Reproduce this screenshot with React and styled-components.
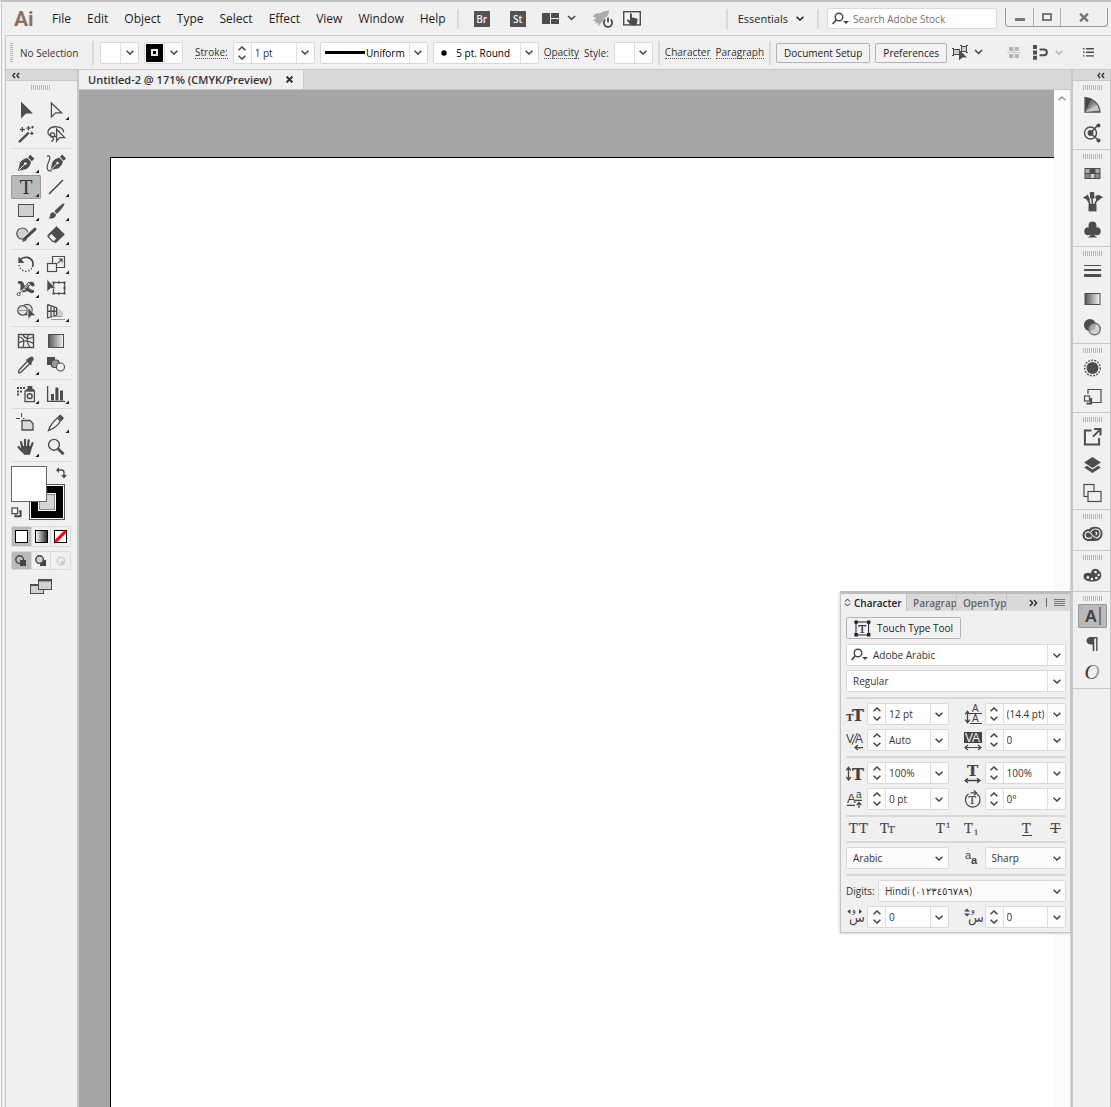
import React, { useState } from 'react';
import styled, { createGlobalStyle } from 'styled-components';

const GlobalStyle = createGlobalStyle`
  * {
    box-sizing: border-box;
  }
  body {
    margin: 0;
    background: #f0f0f0;
    color: #333;
    font-family: 'Open Sans', 'Noto Sans', 'DejaVu Sans', sans-serif;
    font-size: 10px;
    overflow: hidden;
  }
  button, input, select {
    margin: 0;
    padding: 0;
    border: 0;
    background: none;
    color: inherit;
    font: inherit;
  }
  svg {
    display: block;
    flex: none;
  }
`;

/* ---------- layout ---------- */

const Window = styled.div`
  min-height: 100vh;
  display: flex;
  flex-direction: column;
  border-top: 2px solid #c3c3c3;
  border-left: 1px solid #f8f8f8;
`;

const Frame = styled.div`
  flex: 1;
  display: flex;
  flex-direction: column;
  padding-left: 3px;
  border-left: 1px solid #c6c6c6;
`;

const MenuBar = styled.header`
  display: flex;
  align-items: center;
  height: 33px;
  padding: 0 3px 0 9px;
`;

const Logo = styled.span`
  width: 30px;
  color: #8b7062;
  font-family: Roboto, sans-serif;
  font-size: 21px;
  line-height: 30px;
  font-weight: 700;
`;

const Menus = styled.nav`
  display: flex;
  gap: 16px;
  padding-left: 8px;
`;

const MenuItem = styled.button`
  color: #1e1e1e;
  font-size: 12px;
  line-height: 18px;
`;

const Divider = styled.span`
  width: 2px;
  height: ${props => props.$height || 20}px;
  margin: 0 ${props => props.$after || 0}px 0 ${props => props.$before || 0}px;
  background: #dadada;
`;

const Spacer = styled.span`
  flex: none;
  width: ${props => props.$width}px;
`;

const AppBar = styled.div`
  display: flex;
  align-items: center;
  padding-left: 15px;
`;

const AppBadge = styled.button`
  width: 16px;
  height: 16px;
  margin-right: 16px;
  background: #535353;
  color: #eee;
  font-size: 10px;
  line-height: 16px;
  font-weight: 600;
  & + & {
    margin-left: 4px;
  }
`;

const IconButton = styled.button`
  display: flex;
  flex: none;
  align-items: center;
  justify-content: center;
  width: ${props => props.$width || 20}px;
  height: 20px;
  color: #4d4d4d;
  opacity: ${props => (props.disabled ? 0.35 : 1)};
`;

const Right = styled.div`
  display: flex;
  align-items: center;
  margin-left: auto;
`;

const Workspace = styled.button`
  display: flex;
  align-items: center;
  gap: 8px;
  color: #1e1e1e;
  font-size: 11px;
`;

const Search = styled.label`
  display: flex;
  align-items: center;
  gap: 4px;
  width: 170px;
  height: 21px;
  padding: 0 4px;
  background: #fff;
  border: 1px solid #d9d9d9;
  border-radius: 3px;
  input {
    flex: 1;
    min-width: 0;
    font-size: 10px;
    outline: none;
  }
  input::placeholder {
    color: #707070;
    opacity: 1;
  }
`;

const WindowControls = styled.div`
  display: flex;
  align-self: flex-start;
  height: 19px;
  margin-left: 8px;
  border: 1px solid #999;
  border-top: 0;
  border-radius: 0 0 4px 4px;
  button {
    display: flex;
    align-items: center;
    justify-content: center;
    width: 27px;
    color: #777;
  }
  button + button {
    border-left: 1px solid #b0b0b0;
  }
  button:last-child {
    width: 47px;
  }
`;

const ControlBar = styled.div`
  display: flex;
  align-items: center;
  height: 35px;
  padding: 0 17px 0 4px;
  border: 1px solid #c8c8c8;
  border-right: 0;
`;

const Grip = styled.span`
  flex: none;
  width: ${props => (props.$vertical ? 3 : 19)}px;
  height: ${props => (props.$vertical ? 19 : 5)}px;
  background: repeating-linear-gradient(
    ${props => (props.$vertical ? '180deg' : '90deg')},
    #b8b8b8 0 1px,
    transparent 1px 2px
  );
`;

const Selection = styled.span`
  width: 72px;
  padding-left: 7px;
  white-space: nowrap;
`;

const Controls = styled.div`
  display: flex;
  align-items: center;
  gap: 5px;
  white-space: nowrap;
`;

const TextLink = styled.a`
  color: #333;
  line-height: 12px;
  text-decoration: none;
  border-bottom: 1px dotted #555;
`;

const PushButton = styled.button`
  display: flex;
  align-items: center;
  gap: 6px;
  height: ${props => props.$height || 20}px;
  padding: 0 7px;
  border: 1px solid #b4b4b4;
  border-radius: 2px;
  background: #f2f2f2;
  color: #222;
  white-space: nowrap;
`;

const Box = styled.div`
  display: flex;
  width: ${props => (props.$width ? `${props.$width}px` : 'auto')};
  flex: ${props => (props.$width ? 'none' : '1')};
  min-width: 0;
  height: 22px;
  border: 1px solid #d9d9d9;
  border-radius: 2px;
  background: #fff;
  overflow: hidden;
  input {
    flex: 1;
    width: 0;
    min-width: 0;
    padding-left: ${props => (props.$tight ? 0 : 3)}px;
    outline: none;
  }
`;

const BoxButton = styled.button`
  display: flex;
  flex: none;
  align-items: center;
  justify-content: center;
  width: 18px;
  border-left: 1px solid #dedede;
  background: #fcfcfc;
  color: #444;
`;

const Spinner = styled.div`
  display: flex;
  flex: none;
  flex-direction: column;
  width: 18px;
  padding: 1px 0;
  border-right: 1px solid #dedede;
  background: #fcfcfc;
  button {
    display: flex;
    flex: 1;
    align-items: center;
    justify-content: center;
    color: #444;
  }
`;

const BoxValue = styled.span`
  display: flex;
  flex: 1;
  align-items: center;
  justify-content: space-between;
  padding: 0 4px;
  color: #000;
  font-weight: 500;
`;

const StrokeSwatch = styled.span`
  flex: 1;
  display: grid;
  place-items: center;
  margin: 1px;
  background: #000;
  &::after {
    content: '';
    width: 3px;
    height: 3px;
    border: 2px solid #e4e4e4;
  }
`;

const Body = styled.div`
  flex: 1;
  display: flex;
`;

/* ---------- toolbox ---------- */

const CollapseBar = styled.button`
  display: block;
  width: 100%;
  height: 11px;
  padding: 0 5px;
  background: #d9d9d9;
  border-bottom: 1px solid #c8c8c8;
  color: #333;
  svg {
    margin-left: ${props => (props.$right ? 'auto' : 0)};
  }
`;

const Toolbox = styled.aside`
  display: flex;
  flex: none;
  flex-direction: column;
  width: 74px;
  border-left: 1px solid #c8c8c8;
  border-right: 2px solid #c8c8c8;
  > ${Grip} {
    margin: 4px 0 0 25px;
  }
`;

const ToolList = styled.div`
  width: 60px;
  margin: 8px 0 0 5px;
`;

const ToolGroup = styled.div`
  display: grid;
  grid-template-columns: 1fr 1fr;
  padding-bottom: 2px;
  margin-bottom: 2px;
  border-bottom: 1px solid #d9d9d9;
`;

const ToolButton = styled.button`
  height: 24px;
  color: #4d4d4d;
  border-radius: 2px;
  background: ${props => (props.$active ? '#bababa' : 'none')};
  box-shadow: ${props => (props.$active ? 'inset 0 0 0 1px #999' : 'none')};
`;

const Paint = styled.div`
  position: relative;
  width: 60px;
  height: 56px;
  margin-top: 4px;
`;

const FillSwatch = styled.button`
  position: absolute;
  top: 0;
  left: 0;
  width: 36px;
  height: 36px;
  background: #fff;
  border: 1px solid #666;
`;

const StrokeRing = styled.button`
  position: absolute;
  top: 18px;
  left: 18px;
  width: 36px;
  height: 36px;
  border: 1px solid #555;
  background: #d4d4d4;
  box-shadow: inset 0 0 0 1px #fff, inset 0 0 0 8px #000, inset 0 0 0 9px #fff,
    inset 0 0 0 10px #888;
`;

const SwapButton = styled.button`
  position: absolute;
  top: 0;
  right: 4px;
  color: #4d4d4d;
`;

const DefaultsButton = styled.button`
  position: absolute;
  bottom: 4px;
  left: 0;
  color: #4d4d4d;
`;

const Modes = styled.div`
  display: flex;
  height: ${props => props.$height}px;
  margin-top: 4px;
  border: 1px solid #dadada;
  border-radius: 2px;
  button {
    flex: 1;
    display: grid;
    place-items: center;
  }
  button:first-child {
    background: #bababa;
  }
  button + button {
    border-left: 1px solid #dadada;
  }
`;

const ScreenMode = styled.button`
  display: block;
  margin: 9px auto 0;
  color: #4d4d4d;
`;

/* ---------- document ---------- */

const Document = styled.main`
  position: relative;
  flex: 1;
  display: flex;
  flex-direction: column;
  min-width: 0;
`;

const DocTabs = styled.div`
  display: flex;
  height: 20px;
  background: #d9d9d9;
  border-bottom: 1px solid #c4c4c4;
`;

const DocTab = styled.div`
  display: flex;
  align-items: center;
  gap: 14px;
  padding: 0 10px 0 9px;
  background: #f0f0f0;
  border-right: 1px solid #c8c8c8;
  font-size: 11px;
  font-weight: 600;
  white-space: nowrap;
`;

const CanvasArea = styled.div`
  flex: 1;
  display: flex;
`;

const Canvas = styled.div`
  flex: 1;
  display: flex;
  padding: 67px 0 0 31px;
  background: #a5a5a5;
`;

const Artboard = styled.div`
  flex: 1;
  background: #fff;
  border-top: 1px solid #000;
  border-left: 1px solid #000;
`;

const ScrollTrack = styled.div`
  width: 17px;
  padding: 6px 4px;
  background: #fbfbfb;
  border-right: 1px solid #d4d4d4;
  color: #999;
`;

/* ---------- dock ---------- */

const Dock = styled.aside`
  flex: none;
  width: 40px;
  border-left: 2px solid #c8c8c8;
  border-right: 1px solid #c8c8c8;
`;

const DockGroup = styled.div`
  display: flex;
  flex-direction: column;
  align-items: center;
  padding: 4px 0 1px 2px;
  border-bottom: 1px solid #c8c8c8;
`;

const DockList = styled.div`
  display: flex;
  flex-direction: column;
  gap: 4px;
  padding: 3px 0;
`;

const DockButton = styled.button`
  display: grid;
  place-items: center;
  width: 29px;
  height: 24px;
  border-radius: 2px;
  color: #4d4d4d;
  background: ${props => (props.$active ? '#bababa' : 'none')};
  box-shadow: ${props => (props.$active ? 'inset 0 0 0 1px #999' : 'none')};
`;

/* ---------- character panel ---------- */

const Panel = styled.section`
  position: absolute;
  top: 521px;
  right: 0;
  width: 231px;
  background: #f0f0f0;
  border: 1px solid #c4c4c4;
  border-top: 3px solid #bcbcbc;
  box-shadow: -1px 1px 2px rgba(0, 0, 0, 0.15);
`;

const PanelTabs = styled.div`
  display: flex;
  height: 17px;
  background: #d9d9d9;
`;

const PanelTab = styled.button`
  display: flex;
  align-items: center;
  gap: 3px;
  width: ${props => props.$width}px;
  padding-left: ${props => (props.$active ? 3 : 6)}px;
  overflow: hidden;
  white-space: nowrap;
  font-weight: 600;
  color: ${props => (props.$active ? '#222' : '#666')};
  background: ${props => (props.$active ? '#f0f0f0' : '#d9d9d9')};
  border-right: 1px solid #c4c4c4;
`;

const PanelMenu = styled.div`
  display: flex;
  align-items: center;
  gap: 8px;
  margin-left: auto;
  padding-right: 5px;
  color: #333;
  button + button {
    padding-left: 7px;
    border-left: 1px solid #666;
  }
`;

const PanelBody = styled.div`
  display: flex;
  flex-direction: column;
  gap: 4px;
  padding: 6px 4px 4px 5px;
`;

const TouchRow = styled.div`
  display: flex;
  padding-bottom: 1px;
`;

const Rule = styled.hr`
  width: 100%;
  height: 2px;
  margin: 1px 0 0;
  border: 0;
  background: #d9d9d9;
`;

const FieldPair = styled.div`
  display: grid;
  grid-template-columns: 1fr 1fr;
  gap: 15px;
`;

const FieldRow = styled.div`
  display: flex;
  align-items: center;
  min-width: 0;
`;

const FieldIcon = styled.label`
  flex: none;
  width: 21px;
  color: #444;
`;

const FontSearch = styled.label`
  display: flex;
  align-items: center;
  width: 26px;
  padding-left: 4px;
`;

const DigitsLabel = styled.label`
  flex: none;
  width: 32px;
`;

const TypeStyles = styled.div`
  display: flex;
  justify-content: space-between;
  height: 15px;
  padding: 0 4px 0 2px;
  div {
    display: flex;
    gap: 9px;
  }
  button {
    color: #444;
  }
`;

const SelectBox = styled.div`
  position: relative;
  flex: 1;
  min-width: 0;
  height: 22px;
  border: 1px solid #d9d9d9;
  border-radius: 2px;
  background: ${props => (props.$split ? '#fff' : '#fbfbfb')};
  select {
    width: 100%;
    height: 20px;
    padding-left: 6px;
    appearance: none;
    outline: none;
  }
`;

const SelectArrow = styled.span`
  position: absolute;
  top: 0;
  right: 0;
  display: grid;
  place-items: center;
  width: 18px;
  height: 20px;
  border-left: 1px solid ${props => (props.$split ? '#dedede' : 'transparent')};
  background: #fcfcfc;
  color: #444;
  pointer-events: none;
`;

/* ---------- icons ---------- */

const Chevron = ({ up }) => (
  <svg width='8' height='5' viewBox='0 0 8 5' fill='none' stroke='currentColor' strokeWidth='1.5'>
    <path d={up ? 'M.6 4.3L4 1l3.4 3.3' : 'M.6.7L4 4 7.4.7'} />
  </svg>
);

const DoubleArrow = ({ right }) => (
  <svg width='9' height='10' viewBox='0 0 9 10' fill='none' stroke='currentColor' strokeWidth='1.5'>
    {right ? (
      <path d='M1 2l2.6 3L1 8M5 2l2.6 3L5 8' />
    ) : (
      <path d='M4 3L2 5.5 4 8M8 3L6 5.5 8 8' />
    )}
  </svg>
);

const Lens = () => (
  <svg width='17' height='14' viewBox='0 0 17 14' fill='none' stroke='#444' strokeWidth='1.4'>
    <circle cx='7' cy='5' r='3.8' />
    <path d='M4.3 7.8L.6 12' strokeWidth='1.7' />
    <path d='M11 9h6l-3 3z' fill='#444' stroke='none' />
  </svg>
);

const Nib = () => (
  <g>
    <path d='M2 18L4 9.5Q7 5.5 11.2 5L15 8.8Q14.5 13 10.5 16z' fill='currentColor' />
    <path d='M12 4.2L14.3 1.7 18.4 5.8 15.8 8.2z' fill='currentColor' />
    <path d='M2.6 17.4L9 11' stroke='#f0f0f0' strokeWidth='1' />
    <circle cx='9.4' cy='10.6' r='1.3' fill='#f0f0f0' />
  </g>
);

const toolIcons = {
  selection: <path d='M5 1.6V18.4L10 13.6H17z' fill='currentColor' />,
  direct: (
    <path d='M5.4 3V17L9.6 12.9H15.6z' fill='none' stroke='currentColor' strokeWidth='1.3' />
  ),
  wand: (
    <g>
      <path d='M3 18.2L12.8 8.6' stroke='currentColor' strokeWidth='2.4' />
      <path
        d='M6.3 3v5M3.8 5.5h5M12.5 2v4.4M10.3 4.2h4.4M15.8 7.5v3.6M14 9.3h3.6M16.5 2v2.4M15.3 3.2h2.4'
        stroke='currentColor'
        strokeWidth='1.3'
      />
    </g>
  ),
  lasso: (
    <g fill='none' stroke='currentColor' strokeWidth='1.3'>
      <path d='M10 12.5C4 13.5 1.5 10.5 2 7.5 3 4 7 2.6 11 2.8c4 .2 7 2.4 6.6 5.6' />
      <path d='M5 12.5C3 11 4.5 8.4 7 9s2.4 4-.4 4.3c-2 0-2.4-1.8-1-2.4M6.4 13.4c2 .6 1 3.6-1.4 4' />
      <path d='M10.6 5.2V17l3-3.4H18.6z' fill='#f0f0f0' />
    </g>
  ),
  pen: <Nib />,
  curvature: (
    <g>
      <g transform='translate(2.6 0) scale(.95)'>
        <Nib />
      </g>
      <path
        d='M1 3.4C4.2 1.6 4.4 5 3 8s-3.2 7-.8 9.2c1.4 1 2.6.8 3.4.2'
        fill='none'
        stroke='currentColor'
        strokeWidth='1.2'
      />
    </g>
  ),
  type: (
    <text x='10' y='17' textAnchor='middle' fontFamily='DejaVu Serif, serif' fontSize='19' fill='#333'>
      T
    </text>
  ),
  line: <path d='M3 17L17 3' stroke='currentColor' strokeWidth='1.6' />,
  rect: <rect x='2.5' y='3.5' width='15' height='12' fill='#d0d0d0' stroke='currentColor' />,
  brush: (
    <g fill='currentColor'>
      <path d='M18.4 2.2c-1.4-.6-8.2 6-10 8.2l2.4 2.4c2.2-1.6 8.6-9.2 7.6-10.6z' />
      <path d='M7.6 11.2c-3 .2-3.4 1.8-3.4 3.2 0 1.4-1 2.4-2 2.6 2.6 1.2 7.6.8 7.8-3.4z' />
    </g>
  ),
  shaper: (
    <g>
      <circle cx='6.4' cy='8.6' r='5.6' fill='#d0d0d0' stroke='currentColor' strokeWidth='1.2' />
      <path d='M18.6 4.4l-9.6 9' stroke='#f0f0f0' strokeWidth='5' />
      <path d='M19 4.2L9.4 13.2' stroke='currentColor' strokeWidth='3' strokeLinecap='round' />
      <path d='M8 12l3 3-5 2.2z' fill='currentColor' />
    </g>
  ),
  eraser: (
    <g stroke='currentColor' strokeWidth='1.2'>
      <path d='M10.4 2L18 9.4 9.6 17.4 2 10.4z' fill='currentColor' />
      <path d='M5.4 8L11 13.6 8 16.6H7L2.4 12V11z' fill='#f0f0f0' />
    </g>
  ),
  rotate: (
    <g fill='none' stroke='currentColor' strokeWidth='1.7'>
      <path d='M4 5.6C8 1.8 14.6 3 16.6 7.4c.8 2 .7 3.6 0 5.6' />
      <path d='M15.8 14.2C12.6 19 5 18.8 2.8 11' strokeDasharray='1.4 1.8' strokeWidth='1.4' />
      <path d='M2.4 2.6V9H8.6z' fill='currentColor' stroke='none' />
    </g>
  ),
  scale: (
    <g fill='none' stroke='currentColor' strokeWidth='1.2'>
      <path d='M6.5 9V2.5h12v11H11' />
      <rect x='1.5' y='9.5' width='9' height='8' />
      <path d='M11.6 9.4l4-4M12.6 5h3.4v3.4' />
    </g>
  ),
  width: (
    <g>
      <path
        d='M2 3.4c3-1.2 6 0 6 3 0 1.4 1 1.6 2.2.4C12 4.6 15 3 17.4 4.4c1.8 1.2 1.4 3.6-.4 4-1.6.2-2-.8-2-1.6-1.8 0-2.6 1.6-2 3 .8 1.6 3 2 5.4 2.6 0 3-3.2 3.6-5.4 1.6-1.6-1.4-2.6-.8-4 0-2 1-4 .4-4.6-1.4-.4-1.6.4-3.6.2-5C4.4 5.8 3.2 5 1.6 5.6z'
        fill='currentColor'
      />
      <path d='M2.6 16.4C5 13 8 11 12.4 6.6' fill='none' stroke='#f0f0f0' strokeWidth='2' />
      <path d='M2.6 16.4C5 13 8 11 12.4 6.6' fill='none' stroke='currentColor' />
      <g fill='#f0f0f0' stroke='currentColor'>
        <circle cx='2.6' cy='16.2' r='1.5' />
        <circle cx='12.8' cy='6.2' r='1.5' />
        <circle cx='8' cy='11.4' r='1.5' />
      </g>
    </g>
  ),
  transform: (
    <g>
      <rect x='7.5' y='4.5' width='11' height='11' fill='none' stroke='currentColor' strokeWidth='1.2' />
      <path
        d='M6.5 3.5h2v2h-2zM12 3.5h2v2h-2zM17.5 3.5h2v2h-2zM17.5 9h2v2h-2zM6.5 14.5h2v2h-2zM12 14.5h2v2h-2zM17.5 14.5h2v2h-2z'
        fill='currentColor'
      />
      <path d='M1 1.4V14L4.4 10.4H10z' fill='currentColor' stroke='#f0f0f0' strokeWidth='.6' />
    </g>
  ),
  builder: (
    <g fill='none' stroke='currentColor' strokeWidth='1.2'>
      <circle cx='11' cy='7.6' r='5.2' fill='#e4e4e4' />
      <circle cx='6.6' cy='8.4' r='4.8' fill='#e4e4e4' />
      <path d='M3.6 8.5h11' strokeDasharray='1 1' />
      <path d='M12 5.6V17.4l3.4-3.6H20z' fill='currentColor' stroke='#f0f0f0' strokeWidth='.7' />
    </g>
  ),
  perspective: (
    <g fill='none' stroke='currentColor'>
      <path d='M11 5.5l6 5v4h-6z' fill='#ccc' stroke='none' />
      <path d='M1.6 2.4V16.4M5 3.6V14.8M8 4.8V14M10.6 5.6V13M1.6 2.6L11 5.8M1.6 9L11 9.4M1.6 16L11 13' strokeWidth='1.3' />
      <path d='M6 14.5h10M5 17.5h14' stroke='#999' />
    </g>
  ),
  mesh: (
    <g fill='none' stroke='currentColor'>
      <rect x='2.5' y='3.5' width='15' height='13' strokeWidth='1.4' />
      <path
        d='M2.5 6C7 6 9 9 7 16.5M7 3.5C8 8 13 8 17.5 6M12.6 3.5C10 8 11 12 14 16.5M2.5 12c5-3 10-3 15 .6'
        strokeWidth='1.2'
      />
    </g>
  ),
  gradient: (
    <rect x='2.5' y='3.5' width='15' height='13' fill='url(#fadeRight)' stroke='currentColor' />
  ),
  dropper: (
    <g>
      <path
        d='M11 6.8L3.6 14.4c-1 1.2-1.4 2.4-1 3 .6.6 2 .2 3-.8L13.2 9.2'
        fill='none'
        stroke='currentColor'
        strokeWidth='1.4'
      />
      <path
        d='M9.6 4.8l1.6-.6c.4-.4 2.4-2.8 4.4-2.8 2.2.2 2.6 2.4 1.6 3.8-.6 1-1.4 1.6-1.4 1.6l-.4 2.8-1.2 1z'
        fill='currentColor'
      />
    </g>
  ),
  blend: (
    <g stroke='currentColor' strokeWidth='1.1'>
      <path d='M1 2h8v8H1z' fill='currentColor' stroke='none' />
      <rect x='5.5' y='5' width='7.5' height='7.5' rx='2.5' fill='#999' />
      <circle cx='14.5' cy='12' r='4' fill='#f0f0f0' />
    </g>
  ),
  sprayer: (
    <g>
      <path
        d='M1 3h2v2H1zM4 3h2v2H4zM7 3h2v2H7zM1 6.4h2v2H1zM4 6.4h2v2H4zM1 9.6h2v2H1z'
        fill='currentColor'
      />
      <path d='M11.6 2h4.8v3h1.8v2h-8V5h1.4z' fill='currentColor' />
      <rect x='9' y='7' width='9.4' height='10.6' fill='none' stroke='currentColor' strokeWidth='1.3' />
      <circle cx='13.7' cy='12.2' r='2.4' fill='none' stroke='currentColor' strokeWidth='1.5' />
    </g>
  ),
  graph: (
    <g>
      <path d='M1.6 2v15.4H19' fill='none' stroke='currentColor' strokeWidth='1.3' />
      <path d='M5 10h3v6.4H5zM9.4 3.6h3v12.8h-3zM14 6.6h3v9.8h-3z' fill='currentColor' />
    </g>
  ),
  artboard: (
    <g fill='none' stroke='currentColor'>
      <path d='M0 5.5h4M5.5 0v4M7 5.5h1.4' />
      <path d='M6 7.5h8l3 3v6.5H6z' fill='#d8d8d8' strokeWidth='1.3' />
    </g>
  ),
  slice: (
    <g>
      <path
        d='M2.4 17.6C4 13 7 8.6 11.4 5L14.4 8c-2 4-6.6 7.6-12 9.6z'
        fill='none'
        stroke='currentColor'
        strokeWidth='1.3'
      />
      <path d='M11.6 3.8L14.4 1.6 18 5 15.4 8.2z' fill='currentColor' />
    </g>
  ),
  hand: (
    <g fill='none' stroke='currentColor' strokeLinecap='round' strokeWidth='2.2'>
      <path d='M6.2 10L5 5M9 9V2.8M12 9.4l.6-6M14.8 10.6l1.8-4.4M5.6 13.6L2.6 10' />
      <path
        d='M5.4 9h9.8c1 0 .4 4-.6 6.6-.4 1.2-.6 1.8-.6 2.2H8c-.4-1.6-2.2-2.4-3.2-4.6z'
        fill='currentColor'
        stroke='none'
      />
    </g>
  ),
  zoom: (
    <g fill='none' stroke='currentColor'>
      <circle cx='8' cy='7.8' r='5.4' strokeWidth='1.4' />
      <path d='M12 11.8l5.6 5.4' strokeWidth='2.8' />
    </g>
  )
};

const ToolIcon = ({ name, more }) => (
  <svg width='30' height='24' viewBox='0 0 30 24'>
    <g transform='translate(5 2)'>{toolIcons[name]}</g>
    {more && <path d='M28 18.4V22H24.4z' fill='#222' />}
  </svg>
);

const dockIcons = {
  guide: (
    <g>
      <path d='M2.6 17V2.6C10 3 17 9 17.4 17z' fill='#999' stroke='currentColor' strokeWidth='1.4' />
      <path d='M2.6 17L3 2.8C5.6 3 7.6 3.6 9 4.6z' fill='#444' />
      <path d='M2.6 17L9 4.6 12 6.6z' fill='#777' />
      <path d='M2.6 17L14.6 9.6 17 15.6z' fill='#c8c8c8' />
    </g>
  ),
  share: (
    <g fill='none' stroke='currentColor' strokeWidth='1.4'>
      <circle cx='8' cy='10' r='6' />
      <circle cx='8' cy='10' r='2.2' fill='currentColor' />
      <path d='M8 10l7-7.4M8 10l7.6 7' />
      <circle cx='16' cy='2.6' r='2' fill='currentColor' stroke='none' />
      <circle cx='16' cy='17.4' r='2' fill='currentColor' stroke='none' />
    </g>
  ),
  swatches: (
    <g stroke='currentColor'>
      <rect x='2.5' y='4.5' width='15' height='10' fill='currentColor' />
      <path d='M3 5h4v4H3zM13 5h4v4h-4z' fill='#aaa' stroke='none' />
      <path d='M3 10h4v4H3zM13 10h4v4h-4z' fill='#888' stroke='none' />
      <path d='M8 10h4v4H8z' fill='#c8c8c8' stroke='none' />
    </g>
  ),
  brushes: (
    <g fill='none' stroke='currentColor' strokeWidth='1.6'>
      <path d='M6 12h8v7.4H6z' fill='currentColor' stroke='none' />
      <path d='M7.6 12L4.4 6.4M10 12L9.4 5M12.4 12l3-5.6' />
      <path
        d='M2 5.6l3-2 1.6 4zM8 1l2.8-.6.4 5.4H8.4zM13.6 4.6c2-1.4 4-.8 5.4.6-2 .4-2.6 3.4-4.6 2.8z'
        fill='currentColor'
      />
    </g>
  ),
  symbols: (
    <g fill='currentColor'>
      <circle cx='10' cy='5.4' r='4' />
      <circle cx='5.8' cy='11.2' r='4' />
      <circle cx='14.2' cy='11.2' r='4' />
      <path d='M9.2 9h1.6c0 4 .4 6.4 4 8.6H5.2c3.6-2.2 4-4.6 4-8.6z' />
    </g>
  ),
  stroke: (
    <path d='M1.6 4h17v1h-17zM1.6 8h17v2h-17zM1.6 13h17v3h-17z' fill='currentColor' />
  ),
  gradient: (
    <rect x='2.5' y='4.5' width='15' height='11' fill='url(#fadeRight)' stroke='currentColor' />
  ),
  transparency: (
    <g>
      <circle cx='7.4' cy='8' r='6' fill='#4d4d4d' />
      <circle cx='12' cy='12' r='5.8' fill='#c8c8c8' fillOpacity='.75' stroke='#666' strokeWidth='1.3' />
    </g>
  ),
  appearance: (
    <g>
      <circle cx='10' cy='10' r='6' fill='currentColor' />
      <circle cx='10' cy='10' r='7.8' fill='none' stroke='currentColor' strokeWidth='1.2' strokeDasharray='2 1.2' />
    </g>
  ),
  styles: (
    <g fill='none' stroke='currentColor' strokeWidth='1.2'>
      <path d='M5.5 8V3.5h13v13H9' />
      <rect x='2' y='10' width='5' height='5' />
      <path d='M8.6 12v5.4H4' strokeWidth='2' />
    </g>
  ),
  assets: (
    <g fill='none' stroke='currentColor' strokeWidth='2'>
      <path d='M9 3.4H2.4v14.2h14.2V11' />
      <path d='M10.4 9.6l6.4-6.2M11.6 2H18v6.4' />
    </g>
  ),
  layers: (
    <g fill='currentColor'>
      <path d='M10 2l8.4 5.6L10 13 1.6 7.6z' />
      <path d='M1.6 12.4L4.4 10.8 10 14.4l5.6-3.6 2.8 1.6L10 18z' />
    </g>
  ),
  boards: (
    <g fill='#f0f0f0' stroke='currentColor' strokeWidth='1.2'>
      <rect x='1.5' y='1.5' width='10' height='12' />
      <rect x='5.5' y='8.5' width='13' height='10' />
    </g>
  ),
  cloud: (
    <g fill='none'>
      <path
        d='M12.6 2.8c4.6 0 7.4 3 7.4 7s-3 7.2-7.4 7.2H6.4C2.6 17 0 14.6 0 11.2 0 7.8 2.8 5 6.6 5.2 8 3.6 10 2.8 12.6 2.8z'
        fill='currentColor'
      />
      <path
        d='M13 13.4c-3.6 0-3.8-5.6-7-5.6-4.6 0-4.4 6.6 0 6.6 1.4 0 2.4-.4 3.4-1.4M8.4 7.6c1.2-1.8 2.6-2.6 4.4-2.6 3 0 4.8 2 4.8 4.6s-1.8 4.4-4.6 4.4M13 10.6c1.8 0 1.6-2.4-.2-2.4'
        stroke='#f0f0f0'
        strokeWidth='1.2'
      />
    </g>
  ),
  palette: (
    <g>
      <path
        d='M1 11.4C1.2 8 4.4 7.6 7 8c2.6.2 1.4-2.4 3.2-3.6C14 2.4 19 6 18.8 10.4c-.2 4-4 6-8.8 6-5.4 0-9-1.6-9-5z'
        fill='currentColor'
      />
      <g fill='#f0f0f0'>
        <circle cx='13' cy='7' r='1.3' />
        <circle cx='16.2' cy='10' r='1.2' />
        <circle cx='13.8' cy='13' r='1.3' />
        <circle cx='9.4' cy='14' r='1.3' />
        <circle cx='5.4' cy='12.4' r='1.3' />
      </g>
    </g>
  ),
  character: (
    <g>
      <text
        x='8.5'
        y='16'
        textAnchor='middle'
        fontSize='17'
        fontWeight='700'
        fontFamily='Liberation Sans, sans-serif'
        fill='#444'
      >
        A
      </text>
      <path d='M17.5 1v18' stroke='#333' />
    </g>
  ),
  paragraph: (
    <path d='M15 3v14h-1.4V4.6H11.8V17h-1.6v-6.6C6.4 11 4 9.4 4 6.8 4 4.4 5.8 3 8.4 3z' fill='currentColor' />
  ),
  opentype: (
    <text
      x='9.5'
      y='17'
      textAnchor='middle'
      fontSize='21'
      fontStyle='italic'
      fontFamily='Liberation Serif, serif'
      fill='url(#fadeO)'
    >
      O
    </text>
  )
};

const DockIcon = ({ name }) => (
  <svg width='21' height='20' viewBox='0 0 20 20'>
    {dockIcons[name]}
  </svg>
);

const Serif = ({ x, y, size, children, bold }) => (
  <text
    x={x}
    y={y}
    fontSize={size}
    fontWeight={bold ? 700 : 400}
    fontFamily='DejaVu Serif, serif'
    fill='currentColor'
    stroke='currentColor'
    strokeWidth='.2'
  >
    {children}
  </text>
);

const Sans = ({ x, y, size, children, fill }) => (
  <text x={x} y={y} fontSize={size} fontFamily='Liberation Sans, sans-serif' fill={fill || 'currentColor'}>
    {children}
  </text>
);

const Arabic = ({ x, y, size, children }) => (
  <text x={x} y={y} fontSize={size} fontFamily='DejaVu Sans, sans-serif' fill='currentColor'>
    {children}
  </text>
);

const fieldIcons = {
  size: (
    <g>
      <Serif x='0' y='17' size='10' bold>T</Serif>
      <Serif x='6' y='17' size='16' bold>T</Serif>
    </g>
  ),
  leading: (
    <g>
      <Sans x='8' y='8' size='10'>A</Sans>
      <Sans x='8' y='18' size='10'>A</Sans>
      <path d='M6 9.5h12M6 19.5h12' stroke='currentColor' />
      <path d='M3.5 8v10M1.2 10.4l2.3-3 2.3 3M1.2 15.6l2.3 3 2.3-3' fill='none' stroke='currentColor' strokeWidth='1.3' />
    </g>
  ),
  kerning: (
    <g>
      <Sans x='0' y='13' size='12'>V</Sans>
      <Sans x='9' y='13' size='12'>A</Sans>
      <path d='M6 14.6L11.4 3' stroke='currentColor' />
      <path d='M9.6 17.6h7.4M12 15l-3 2.6L12 20' fill='none' stroke='currentColor' strokeWidth='1.2' />
    </g>
  ),
  tracking: (
    <g>
      <path d='M0 2h18v11H0z' fill='#444' />
      <Sans x='1' y='12' size='12' fill='#f0f0f0'>VA</Sans>
      <path d='M1 17.5h16M4 15l-3 2.5L4 20M14 15l3 2.5L14 20' fill='none' stroke='currentColor' strokeWidth='1.2' />
    </g>
  ),
  vscale: (
    <g>
      <Serif x='6' y='17' size='16' bold>T</Serif>
      <path d='M2.5 5v11M.2 7.4l2.3-3 2.3 3M.2 14l2.3 3 2.3-3' fill='none' stroke='currentColor' strokeWidth='1.3' />
    </g>
  ),
  hscale: (
    <g>
      <Serif x='3' y='13' size='15' bold>T</Serif>
      <path d='M1 17.5h15M4 15.2l-3 2.3 3 2.3M13 15.2l3 2.3-3 2.3' fill='none' stroke='currentColor' strokeWidth='1.3' />
    </g>
  ),
  baseline: (
    <g>
      <Sans x='1' y='14' size='13'>A</Sans>
      <Sans x='10' y='9' size='10'>a</Sans>
      <path d='M1 16.3h8M9 11.3h7M13 19v-5M10.8 16l2.2-2.6 2.2 2.6' fill='none' stroke='currentColor' strokeWidth='1.2' />
    </g>
  ),
  rotation: (
    <g fill='none' stroke='currentColor' strokeWidth='1.2'>
      <Serif x='4.4' y='15' size='11'>T</Serif>
      <path d='M13.2 5A7.3 7.3 0 1 1 4.6 4.8M6.4 3.8h6M9.8 1.4l3 2.6-3 2.4' />
    </g>
  ),
  aa: (
    <g>
      <Sans x='1' y='11' size='11'>a</Sans>
      <text x='7' y='16' fontSize='11' fontWeight='700' fontFamily='Liberation Sans, sans-serif' fill='currentColor'>
        a
      </text>
    </g>
  ),
  kashida: (
    <g>
      <Arabic x='3' y='15' size='13'>س</Arabic>
      <Arabic x='6' y='6' size='8'>و</Arabic>
      <path d='M4.4 2v5L1.4 4.5zM13 2v5l3-2.5z' fill='currentColor' />
    </g>
  ),
  diacritic: (
    <g>
      <Arabic x='4' y='15' size='13'>س</Arabic>
      <Arabic x='7' y='6' size='8'>و</Arabic>
      <path d='M0 4.4h6L3 1.4zM0 6.6h6l-3 3z' fill='currentColor' />
    </g>
  )
};

const menus = ['File', 'Edit', 'Object', 'Type', 'Select', 'Effect', 'View', 'Window', 'Help'];

// [icon, label, has hidden tools]
const toolGroups = [
  [
    ['selection', 'Selection', false],
    ['direct', 'Direct Selection', true],
    ['wand', 'Magic Wand', false],
    ['lasso', 'Lasso', false]
  ],
  [
    ['pen', 'Pen', true],
    ['curvature', 'Curvature', false],
    ['type', 'Type', true],
    ['line', 'Line Segment', true],
    ['rect', 'Rectangle', true],
    ['brush', 'Paintbrush', true],
    ['shaper', 'Shaper', true],
    ['eraser', 'Eraser', true]
  ],
  [
    ['rotate', 'Rotate', true],
    ['scale', 'Scale', true],
    ['width', 'Width', true],
    ['transform', 'Free Transform', false],
    ['builder', 'Shape Builder', true],
    ['perspective', 'Perspective Grid', true]
  ],
  [
    ['mesh', 'Mesh', false],
    ['gradient', 'Gradient', false],
    ['dropper', 'Eyedropper', true],
    ['blend', 'Blend', false]
  ],
  [
    ['sprayer', 'Symbol Sprayer', true],
    ['graph', 'Column Graph', true]
  ],
  [
    ['artboard', 'Artboard', false],
    ['slice', 'Slice', true],
    ['hand', 'Hand', true],
    ['zoom', 'Zoom', false]
  ]
];

const dockGroups = [
  ['guide', 'share'],
  ['swatches', 'brushes', 'symbols'],
  ['stroke', 'gradient', 'transparency'],
  ['appearance', 'styles'],
  ['assets', 'layers', 'boards'],
  ['cloud'],
  ['palette'],
  ['character', 'paragraph', 'opentype']
];

const Stepper = ({ name }) => (
  <Spinner>
    <button aria-label={`Increase ${name}`}>
      <Chevron up />
    </button>
    <button aria-label={`Decrease ${name}`}>
      <Chevron />
    </button>
  </Spinner>
);

const Field = ({ icon, name, value }) => {
  const [text, setText] = useState(value);
  return (
    <FieldRow>
      <FieldIcon htmlFor={name} aria-label={name}>
        <svg width='19' height='21' viewBox='0 0 19 21'>
          {fieldIcons[icon]}
        </svg>
      </FieldIcon>
      <Box>
        <Stepper name={name} />
        <input id={name} value={text} onChange={e => setText(e.target.value)} />
        <BoxButton aria-label={`${name} presets`}>
          <Chevron />
        </BoxButton>
      </Box>
    </FieldRow>
  );
};

const Select = ({ id, label, options, split }) => (
  <SelectBox $split={split}>
    <select id={id} aria-label={label}>
      {options.map(option => (
        <option key={option}>{option}</option>
      ))}
    </select>
    <SelectArrow $split={split}>
      <Chevron />
    </SelectArrow>
  </SelectBox>
);

const TitleBar = () => (
  <MenuBar>
    <Logo>Ai</Logo>
    <Menus>
      {menus.map(menu => (
        <MenuItem key={menu}>{menu}</MenuItem>
      ))}
    </Menus>
    <Divider $before={11} />
    <AppBar>
      <AppBadge>Br</AppBadge>
      <AppBadge>St</AppBadge>
      <IconButton $width={34} aria-label='Arrange documents'>
        <svg width='34' height='12' viewBox='0 0 34 12'>
          <path d='M0 0h8v11H0zM9 0h8v5H9zM9 6h8v5H9z' fill='currentColor' />
          <path d='M26 3l3.6 3.4L33.2 3' fill='none' stroke='currentColor' strokeWidth='1.6' />
        </svg>
      </IconButton>
      <Spacer $width={16} />
      <IconButton $width={22} aria-label='GPU performance'>
        <svg width='22' height='18' viewBox='0 0 22 18'>
          <path d='M17 .6C11 .8 6 4 4.4 8L.6 11.2 4 11l-1 3 3-1.4v3.6l4-4C14 9 17 5 17 .6z' fill='#aaa' />
          <path d='M.6 6.4L4 3.6l4-.4L4.6 8z' fill='#aaa' />
          <circle cx='16' cy='12.4' r='5.6' fill='#f0f0f0' />
          <path d='M13.4 9.4a4.2 4.2 0 1 0 5.2 0M16 7.4v5' fill='none' stroke='currentColor' strokeWidth='1.8' />
        </svg>
      </IconButton>
      <Spacer $width={9} />
      <IconButton $width={18} aria-label='Touch workspace'>
        <svg width='18' height='15' viewBox='0 0 18 15'>
          <rect x='.7' y='.7' width='16.6' height='13.2' fill='none' stroke='currentColor' strokeWidth='1.4' />
          <path
            d='M7 2.4c1.6-.8 2 .6 2 1.6v2.4l5 1.2c.8.4.6 3.6-.8 6.8H8L4 9.6c-.4-1.4 1-1.6 3 0z'
            fill='currentColor'
          />
        </svg>
      </IconButton>
    </AppBar>
    <Right>
      <Divider $after={10} />
      <Workspace>
        Essentials
        <Chevron />
      </Workspace>
      <Divider $before={13} $after={8} />
      <Search>
        <Lens />
        <input type='text' aria-label='Search Adobe Stock' placeholder='Search Adobe Stock' />
      </Search>
      <WindowControls>
        <button aria-label='Minimize'>
          <svg width='10' height='10'>
            <path d='M0 6h10v3H0z' fill='currentColor' />
          </svg>
        </button>
        <button aria-label='Maximize'>
          <svg width='10' height='8' fill='none' stroke='currentColor' strokeWidth='2'>
            <path d='M1 1h8v6H1z' />
          </svg>
        </button>
        <button aria-label='Close'>
          <svg width='10' height='9' fill='none' stroke='currentColor' strokeWidth='2.4'>
            <path d='M1 .6l8 7.8M9 .6L1 8.4' />
          </svg>
        </button>
      </WindowControls>
    </Right>
  </MenuBar>
);

const Options = () => (
  <ControlBar>
    <Grip $vertical />
    <Selection>No Selection</Selection>
    <Divider $height={24} $before={7} $after={6} />
    <Controls>
      <Box $width={39}>
        <BoxValue />
        <BoxButton aria-label='Fill'>
          <Chevron />
        </BoxButton>
      </Box>
      <Box $width={39}>
        <StrokeSwatch />
        <BoxButton aria-label='Stroke color'>
          <Chevron />
        </BoxButton>
      </Box>
      <Spacer $width={2} />
      <TextLink href='#stroke'>Stroke:</TextLink>
      <Box $width={82}>
        <Stepper name='stroke weight' />
        <input aria-label='Stroke weight' defaultValue='1 pt' />
        <BoxButton aria-label='Stroke weights'>
          <Chevron />
        </BoxButton>
      </Box>
      <Box $width={108}>
        <BoxValue>
          <svg width='40' height='3'>
            <path d='M0 0h40v3H0z' />
          </svg>
          Uniform
        </BoxValue>
        <BoxButton aria-label='Width profile'>
          <Chevron />
        </BoxButton>
      </Box>
      <Box $width={106}>
        <BoxValue>
          <svg width='13' height='6'>
            <circle cx='6' cy='3' r='2.7' />
          </svg>
          5 pt. Round
          <i />
        </BoxValue>
        <BoxButton aria-label='Brush definition'>
          <Chevron />
        </BoxButton>
      </Box>
      <TextLink href='#opacity'>Opacity</TextLink>
      <span>Style:</span>
      <Box $width={39}>
        <BoxValue />
        <BoxButton aria-label='Graphic style'>
          <Chevron />
        </BoxButton>
      </Box>
      <Divider $height={24} />
      <TextLink href='#character'>Character</TextLink>
      <TextLink href='#paragraph'>Paragraph</TextLink>
      <Divider $height={24} />
      <PushButton>Document Setup</PushButton>
      <PushButton>Preferences</PushButton>
    </Controls>
    <Right>
      <IconButton $width={31} aria-label='Select similar objects'>
        <svg width='31' height='17' viewBox='0 0 31 17'>
          <g fill='#ccc' stroke='currentColor'>
            <rect x='1.5' y='5.5' width='6' height='5' />
            <rect x='9.5' y='2.5' width='5' height='5' />
            <path d='M0 4.5h2M0 11.5h2M8 1.5h2M14 1.5h2M14 8.5h2' />
          </g>
          <path d='M7 5.4V16.6l3.4-3.2H15z' fill='currentColor' />
          <path d='M23 6l3.6 3.4L30.2 6' fill='none' stroke='currentColor' strokeWidth='1.6' />
        </svg>
      </IconButton>
      <Spacer $width={24} />
      <IconButton disabled $width={14} aria-label='Align'>
        <svg width='14' height='13' viewBox='0 0 14 13'>
          <path d='M2 1h4v4H2zM8 1h4v4H8zM2 8h4v4H2zM8 8h4v4H8z' fill='currentColor' />
          <path d='M0 6.5h14M7 0v13' stroke='currentColor' strokeWidth='.6' />
        </svg>
      </IconButton>
      <Spacer $width={12} />
      <IconButton $width={15} aria-label='Snap to pixel'>
        <svg width='15' height='15' viewBox='0 0 15 15'>
          <path d='M0 0h4v4H0zM0 5.4h4v4H0zM0 10.8h4v4H0z' fill='currentColor' />
          <path d='M6.6 4.4H11a2.9 2.9 0 0 1 0 5.8H6.6' fill='none' stroke='currentColor' strokeWidth='2' />
        </svg>
      </IconButton>
      <Spacer $width={6} />
      <IconButton disabled $width={9} aria-label='Snap options'>
        <Chevron />
      </IconButton>
      <Spacer $width={19} />
      <IconButton $width={12} aria-label='Control panel menu'>
        <svg width='11' height='9' viewBox='0 0 11 9'>
          <path
            d='M0 0h1.5v1.4H0zM3 0h8v1.4H3zM0 3.6h1.5V5H0zM3 3.6h8V5H3zM0 7.2h1.5v1.4H0zM3 7.2h8v1.4H3z'
            fill='currentColor'
          />
        </svg>
      </IconButton>
    </Right>
  </ControlBar>
);

const Tools = () => {
  const [active, setActive] = useState('type');
  return (
    <Toolbox>
      <CollapseBar aria-label='Collapse tools'>
        <DoubleArrow />
      </CollapseBar>
      <Grip />
      <ToolList>
        {toolGroups.map((group, i) => (
          <ToolGroup key={i}>
            {group.map(([name, label, more]) => (
              <ToolButton
                key={name}
                aria-label={label}
                $active={name === active}
                onClick={() => setActive(name)}
              >
                <ToolIcon name={name} more={more} />
              </ToolButton>
            ))}
          </ToolGroup>
        ))}
        <Paint>
          <StrokeRing aria-label='Stroke' />
          <FillSwatch aria-label='Fill' />
          <SwapButton aria-label='Swap fill and stroke'>
            <svg width='12' height='13' viewBox='0 0 12 13' fill='none' stroke='currentColor' strokeWidth='1.4'>
              <path d='M2 4h4.4Q9 4 9 6.6V10' />
              <path d='M4 1L1 4l3 3zM6 9h6l-3 3.4z' fill='currentColor' stroke='none' />
            </svg>
          </SwapButton>
          <DefaultsButton aria-label='Default fill and stroke'>
            <svg width='11' height='11' viewBox='0 0 11 11' fill='none' stroke='currentColor'>
              <path d='M8 4.2h1.6v5H4.4V7.6' strokeWidth='2' />
              <rect x='1' y='1' width='5.6' height='5.6' fill='#fff' strokeWidth='1.3' />
            </svg>
          </DefaultsButton>
        </Paint>
        <Modes $height={21}>
          <button aria-label='Color'>
            <svg width='13' height='13'>
              <rect x='.5' y='.5' width='12' height='12' fill='#fff' stroke='#000' />
            </svg>
          </button>
          <button aria-label='Gradient'>
            <svg width='13' height='13'>
              <rect x='.5' y='.5' width='12' height='12' fill='url(#fadeLeft)' stroke='#000' />
            </svg>
          </button>
          <button aria-label='None'>
            <svg width='13' height='13'>
              <rect x='.5' y='.5' width='12' height='12' fill='#fff' stroke='#000' />
              <path d='M1.4 11.6L11.6 1.4' stroke='#f00' strokeWidth='3' />
            </svg>
          </button>
        </Modes>
        <Modes $height={19}>
          <button aria-label='Draw normal'>
            <svg width='12' height='12'>
              <circle cx='4.6' cy='4.6' r='3.8' fill='#bbb' stroke='#444' strokeWidth='1.4' />
              <path d='M5 5h6v6H5z' fill='#444' />
            </svg>
          </button>
          <button aria-label='Draw behind'>
            <svg width='12' height='12'>
              <path d='M5 5h6v6H5z' fill='#444' />
              <circle cx='4.6' cy='4.6' r='3.8' fill='#d0d0d0' stroke='#444' strokeWidth='1.4' />
            </svg>
          </button>
          <button aria-label='Draw inside' disabled>
            <svg width='10' height='10'>
              <circle cx='5' cy='5' r='3.8' fill='#eee' stroke='#ccc' strokeWidth='1.3' />
              <path d='M5 5h3.4L7 8H5z' fill='#ccc' />
            </svg>
          </button>
        </Modes>
        <ScreenMode aria-label='Change screen mode'>
          <svg width='22' height='16' viewBox='0 0 22 16'>
            <g fill='#d0d0d0' stroke='currentColor'>
              <rect x='.5' y='5.5' width='13' height='9' />
              <path d='M.5 6h8' strokeWidth='2' />
              <rect x='8.5' y='.5' width='13' height='10' />
              <path d='M8.5 1.4h13' strokeWidth='2' />
            </g>
          </svg>
        </ScreenMode>
      </ToolList>
    </Toolbox>
  );
};

const CharacterPanel = () => (
  <Panel>
    <PanelTabs>
      <PanelTab $active $width={66}>
        <svg width='7' height='9' viewBox='0 0 7 9' fill='none' stroke='currentColor'>
          <path d='M1 3.6L3.5 1 6 3.6M1 5.4L3.5 8 6 5.4' />
        </svg>
        Character
      </PanelTab>
      <PanelTab $width={50}>Paragraph</PanelTab>
      <PanelTab $width={50}>OpenType</PanelTab>
      <PanelMenu>
        <button aria-label='Collapse panel'>
          <DoubleArrow right />
        </button>
        <button aria-label='Panel menu'>
          <svg width='11' height='9' viewBox='0 0 11 9'>
            <path d='M0 1.5h11M0 3.5h11M0 5.5h11M0 7.5h11' stroke='#777' />
          </svg>
        </button>
      </PanelMenu>
    </PanelTabs>
    <PanelBody>
      <TouchRow>
        <PushButton $height={22}>
          <svg width='17' height='17' viewBox='0 0 17 17'>
            <rect x='2' y='2' width='12.6' height='13' fill='none' stroke='currentColor' />
            <path
              d='M.4.4h3.4v3.4H.4zM13 .4h3.4v3.4H13zM.4 13h3.4v3.4H.4zM13 13h3.4v3.4H13z'
              fill='currentColor'
            />
            <Serif x='4.4' y='12.6' size='11'>T</Serif>
          </svg>
          Touch Type Tool
        </PushButton>
      </TouchRow>
      <FieldRow>
        <Box $tight>
          <FontSearch htmlFor='font-family' aria-label='Font family'>
            <Lens />
          </FontSearch>
          <input id='font-family' defaultValue='Adobe Arabic' />
          <BoxButton aria-label='Font families'>
            <Chevron />
          </BoxButton>
        </Box>
      </FieldRow>
      <FieldRow>
        <Select split label='Font style' options={['Regular', 'Italic', 'Bold', 'Bold Italic']} />
      </FieldRow>
      <Rule />
      <FieldPair>
        <Field icon='size' name='font-size' value='12 pt' />
        <Field icon='leading' name='leading' value='(14.4 pt)' />
      </FieldPair>
      <FieldPair>
        <Field icon='kerning' name='kerning' value='Auto' />
        <Field icon='tracking' name='tracking' value='0' />
      </FieldPair>
      <Rule />
      <FieldPair>
        <Field icon='vscale' name='vertical-scale' value='100%' />
        <Field icon='hscale' name='horizontal-scale' value='100%' />
      </FieldPair>
      <FieldPair>
        <Field icon='baseline' name='baseline-shift' value='0 pt' />
        <Field icon='rotation' name='rotation' value='0°' />
      </FieldPair>
      <Rule />
      <TypeStyles>
        <div>
          <button aria-label='All caps'>
            <svg width='22' height='15'>
              <Serif x='1' y='12' size='13'>T</Serif>
              <Serif x='11' y='12' size='13'>T</Serif>
            </svg>
          </button>
          <button aria-label='Small caps'>
            <svg width='19' height='15'>
              <Serif x='1' y='12' size='13'>T</Serif>
              <Serif x='9' y='12' size='10'>T</Serif>
            </svg>
          </button>
        </div>
        <div>
          <button aria-label='Superscript'>
            <svg width='19' height='15'>
              <Serif x='0' y='12' size='13'>T</Serif>
              <Serif x='10' y='7' size='7'>1</Serif>
            </svg>
          </button>
          <button aria-label='Subscript'>
            <svg width='19' height='15'>
              <Serif x='0' y='12' size='13'>T</Serif>
              <Serif x='10' y='14' size='7'>1</Serif>
            </svg>
          </button>
        </div>
        <div>
          <button aria-label='Underline'>
            <svg width='19' height='15'>
              <Serif x='1' y='12' size='13'>T</Serif>
              <path d='M1 14.5h10' stroke='currentColor' />
            </svg>
          </button>
          <button aria-label='Strikethrough'>
            <svg width='13' height='15'>
              <Serif x='2' y='12' size='13'>T</Serif>
              <path d='M1 7.5h11' stroke='currentColor' />
            </svg>
          </button>
        </div>
      </TypeStyles>
      <Rule />
      <FieldPair>
        <Select label='Language' options={['Arabic', 'English', 'Hebrew']} />
        <FieldRow>
          <FieldIcon htmlFor='anti-aliasing' aria-label='Anti-aliasing'>
            <svg width='19' height='21' viewBox='0 0 19 21'>
              {fieldIcons.aa}
            </svg>
          </FieldIcon>
          <Select id='anti-aliasing' options={['Sharp', 'Crisp', 'Strong', 'None']} />
        </FieldRow>
      </FieldPair>
      <Rule />
      <FieldRow>
        <DigitsLabel htmlFor='digits'>Digits:</DigitsLabel>
        <Select id='digits' options={['Hindi (٠١٢٣٤٥٦٧٨٩)', 'Arabic (0123456789)']} />
      </FieldRow>
      <FieldPair>
        <Field icon='kashida' name='diacritic-x' value='0' />
        <Field icon='diacritic' name='diacritic-y' value='0' />
      </FieldPair>
    </PanelBody>
  </Panel>
);

const Defs = styled.svg`
  position: absolute;
`;

const Gradients = () => (
  <Defs width='0' height='0'>
    <defs>
      <linearGradient id='fadeRight'>
        <stop offset='0' stopColor='#555' />
        <stop offset='1' stopColor='#f4f4f4' />
      </linearGradient>
      <linearGradient id='fadeLeft'>
        <stop offset='0' stopColor='#fff' />
        <stop offset='1' stopColor='#222' />
      </linearGradient>
      <linearGradient id='fadeO'>
        <stop offset='.2' stopColor='#333' />
        <stop offset='.9' stopColor='#aaa' />
      </linearGradient>
    </defs>
  </Defs>
);

const App = () => (
  <Window>
    <GlobalStyle />
    <Gradients />
    <Frame>
      <TitleBar />
      <Options />
      <Body>
        <Tools />
        <Document>
          <DocTabs>
            <DocTab>
              Untitled-2 @ 171% (CMYK/Preview)
              <button aria-label='Close document'>
                <svg width='7' height='7' stroke='currentColor' strokeWidth='2'>
                  <path d='M.6.6l5.8 5.8M6.4.6L.6 6.4' />
                </svg>
              </button>
            </DocTab>
          </DocTabs>
          <CanvasArea>
            <Canvas>
              <Artboard />
            </Canvas>
            <ScrollTrack>
              <Chevron up />
            </ScrollTrack>
          </CanvasArea>
          <CharacterPanel />
        </Document>
        <Dock>
          <CollapseBar $right aria-label='Collapse panels'>
            <DoubleArrow />
          </CollapseBar>
          {dockGroups.map(group => (
            <DockGroup key={group[0]}>
              <Grip />
              <DockList>
                {group.map(name => (
                  <DockButton key={name} aria-label={name} $active={name === 'character'}>
                    <DockIcon name={name} />
                  </DockButton>
                ))}
              </DockList>
            </DockGroup>
          ))}
        </Dock>
      </Body>
    </Frame>
  </Window>
);

export default App;
